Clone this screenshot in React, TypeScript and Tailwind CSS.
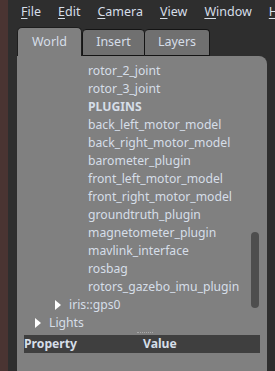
import React from "react";

const menus = ["File", "Edit", "Camera", "View", "Window", "Help"];

const rows: { label: string; bold?: boolean }[] = [
  { label: "rotor_2_joint" },
  { label: "rotor_3_joint" },
  { label: "PLUGINS", bold: true },
  { label: "back_left_motor_model" },
  { label: "back_right_motor_model" },
  { label: "barometer_plugin" },
  { label: "front_left_motor_model" },
  { label: "front_right_motor_model" },
  { label: "groundtruth_plugin" },
  { label: "magnetometer_plugin" },
  { label: "mavlink_interface" },
  { label: "rosbag" },
  { label: "rotors_gazebo_imu_plugin" },
];

function Arrow() {
  return (
    <svg width="6" height="10" viewBox="0 0 6 10" className="shrink-0">
      <path d="M0 0 L6 5 L0 10 Z" fill="#ffffff" />
    </svg>
  );
}

export default function App() {
  return (
    <div
      className="flex h-[371px] w-[275px] overflow-hidden bg-[#2e2e2e] text-[12.2px] text-[#d6dee8]"
      style={{ fontFamily: '"Noto Sans", "Open Sans", sans-serif' }}
    >
      <div className="w-[8px] shrink-0 bg-[#4a3432]" />
      <div className="flex min-w-0 flex-1 flex-col">
        {/* Menu bar */}
        <div className="flex h-[24px] shrink-0 items-center gap-[17px] overflow-hidden whitespace-nowrap pl-[13px] text-[12.5px] leading-none">
          {menus.map((m) => (
            <span key={m}>
              <span className="underline underline-offset-2">{m[0]}</span>
              {m.slice(1)}
            </span>
          ))}
        </div>

        {/* Tabs */}
        <div className="mt-[3px] flex h-[29px] shrink-0 items-end pl-[9px] text-[12.5px]">
          <div className="flex h-[29px] w-[65px] items-center justify-center rounded-t-[5px] border border-b-0 border-[#1e1e1e] bg-[#808080]">
            World
          </div>
          <div className="flex h-[27px] w-[63px] items-center justify-center rounded-t-[4px] border border-[#141414] bg-[#707070]">
            Insert
          </div>
          <div className="flex h-[27px] w-[65px] items-center justify-center rounded-t-[4px] border border-l-0 border-[#141414] bg-[#707070]">
            Layers
          </div>
        </div>

        {/* Panel */}
        <div className="ml-[9px] mr-[8px] flex flex-1 flex-col rounded-tr-[8px] bg-[#808080]">
          <div className="flex pt-[6px]">
            <div className="flex-1">
              {rows.map((r) => (
                <div
                  key={r.label}
                  className={`h-[18px] whitespace-nowrap pl-[71px] leading-[18px] ${r.bold ? "font-bold" : ""}`}
                >
                  {r.label}
                </div>
              ))}
              <div className="flex h-[18px] items-center gap-[8px] pl-[38px]">
                <Arrow />
                <span>iris::gps0</span>
              </div>
              <div className="flex h-[18px] items-center gap-[8px] pl-[18px]">
                <Arrow />
                <span>Lights</span>
              </div>
            </div>
            <div className="mr-[8px] w-[8px] pt-[170px]">
              <div className="h-[76px] w-[8px] rounded-full bg-[#4e4e4e]" />
            </div>
          </div>

          {/* Splitter handle */}
          <div className="flex h-[3px] items-start justify-center">
            <div className="ml-[6px] w-[16px] border-t border-dotted border-[#a8a8a8]" />
          </div>

          {/* Property header */}
          <div className="mx-[7px] flex h-[18px] items-center bg-[#3f3f3f] font-bold leading-none">
            <span className="w-[119px]">Property</span>
            <span>Value</span>
          </div>
        </div>
      </div>
    </div>
  );
}
